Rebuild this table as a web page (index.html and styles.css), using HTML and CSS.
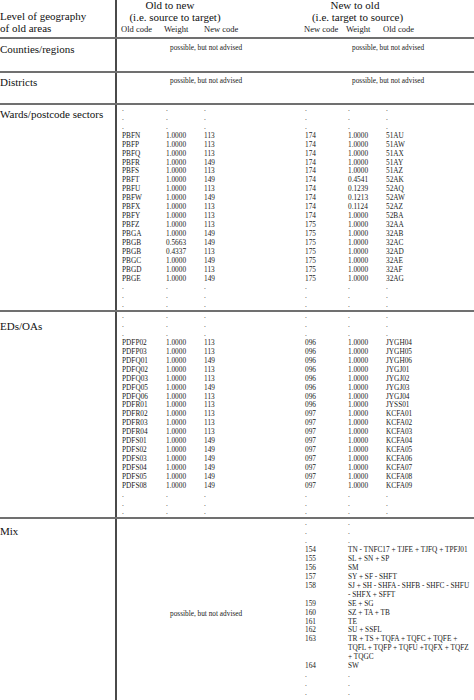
FILE: index.html
```html
<!DOCTYPE html>
<html>
<head>
<meta charset="utf-8">
<link rel="stylesheet" href="styles.css">
</head>
<body>
<div class="table">
  <div class="sec head">
    <div class="lab lab-head">Level of geography<br>of old areas</div>
    <div class="cell">
      <div class="groups">
        <div class="g g1"><div class="t1">Old to new</div><div>(i.e. source to target)</div></div>
        <div class="g g2"><div class="t1">New to old</div><div>(i.e. target to source)</div></div>
      </div>
      <div class="cols"><span>Old code</span><span>Weight</span><span>New code</span><span>New code</span><span>Weight</span><span>Old code</span></div>
    </div>
  </div>

  <div class="sec counties">
    <div class="lab">Counties/regions</div>
    <div class="cell pair"><span>possible, but not advised</span><span>possible, but not advised</span></div>
  </div>

  <div class="sec districts">
    <div class="lab">Districts</div>
    <div class="cell pair"><span>possible, but not advised</span><span>possible, but not advised</span></div>
  </div>

  <div class="sec wards">
    <div class="lab">Wards/postcode sectors</div>
    <div class="cell data">
      <div class="dr"><span>.</span><span>.</span><span>.</span><span>.</span><span>.</span><span>.</span></div>
      <div class="dr"><span>.</span><span>.</span><span>.</span><span>.</span><span>.</span><span>.</span></div>
      <div class="dr"><span>.</span><span>.</span><span>.</span><span>.</span><span>.</span><span>.</span></div>
      <div class="dr"><span>PBFN</span><span>1.0000</span><span>113</span><span>174</span><span>1.0000</span><span>51AU</span></div>
      <div class="dr"><span>PBFP</span><span>1.0000</span><span>113</span><span>174</span><span>1.0000</span><span>51AW</span></div>
      <div class="dr"><span>PBFQ</span><span>1.0000</span><span>113</span><span>174</span><span>1.0000</span><span>51AX</span></div>
      <div class="dr"><span>PBFR</span><span>1.0000</span><span>149</span><span>174</span><span>1.0000</span><span>51AY</span></div>
      <div class="dr"><span>PBFS</span><span>1.0000</span><span>113</span><span>174</span><span>1.0000</span><span>51AZ</span></div>
      <div class="dr"><span>PBFT</span><span>1.0000</span><span>149</span><span>174</span><span>0.4541</span><span>52AK</span></div>
      <div class="dr"><span>PBFU</span><span>1.0000</span><span>113</span><span>174</span><span>0.1239</span><span>52AQ</span></div>
      <div class="dr"><span>PBFW</span><span>1.0000</span><span>149</span><span>174</span><span>0.1213</span><span>52AW</span></div>
      <div class="dr"><span>PBFX</span><span>1.0000</span><span>113</span><span>174</span><span>0.1124</span><span>52AZ</span></div>
      <div class="dr"><span>PBFY</span><span>1.0000</span><span>113</span><span>174</span><span>1.0000</span><span>52BA</span></div>
      <div class="dr"><span>PBFZ</span><span>1.0000</span><span>113</span><span>175</span><span>1.0000</span><span>32AA</span></div>
      <div class="dr"><span>PBGA</span><span>1.0000</span><span>149</span><span>175</span><span>1.0000</span><span>32AB</span></div>
      <div class="dr"><span>PBGB</span><span>0.5663</span><span>149</span><span>175</span><span>1.0000</span><span>32AC</span></div>
      <div class="dr"><span>PBGB</span><span>0.4337</span><span>113</span><span>175</span><span>1.0000</span><span>32AD</span></div>
      <div class="dr"><span>PBGC</span><span>1.0000</span><span>149</span><span>175</span><span>1.0000</span><span>32AE</span></div>
      <div class="dr"><span>PBGD</span><span>1.0000</span><span>113</span><span>175</span><span>1.0000</span><span>32AF</span></div>
      <div class="dr"><span>PBGE</span><span>1.0000</span><span>149</span><span>175</span><span>1.0000</span><span>32AG</span></div>
      <div class="dr"><span>.</span><span>.</span><span>.</span><span>.</span><span>.</span><span>.</span></div>
      <div class="dr"><span>.</span><span>.</span><span>.</span><span>.</span><span>.</span><span>.</span></div>
      <div class="dr"><span>.</span><span>.</span><span>.</span><span>.</span><span>.</span><span>.</span></div>
    </div>
  </div>

  <div class="sec eds">
    <div class="lab">EDs/OAs</div>
    <div class="cell data">
      <div class="dr"><span>.</span><span>.</span><span>.</span><span>.</span><span>.</span><span>.</span></div>
      <div class="dr"><span>.</span><span>.</span><span>.</span><span>.</span><span>.</span><span>.</span></div>
      <div class="dr"><span>.</span><span>.</span><span>.</span><span>.</span><span>.</span><span>.</span></div>
      <div class="dr"><span>PDFP02</span><span>1.0000</span><span>113</span><span>096</span><span>1.0000</span><span>JYGH04</span></div>
      <div class="dr"><span>PDFP03</span><span>1.0000</span><span>113</span><span>096</span><span>1.0000</span><span>JYGH05</span></div>
      <div class="dr"><span>PDFQ01</span><span>1.0000</span><span>149</span><span>096</span><span>1.0000</span><span>JYGH06</span></div>
      <div class="dr"><span>PDFQ02</span><span>1.0000</span><span>113</span><span>096</span><span>1.0000</span><span>JYGJ01</span></div>
      <div class="dr"><span>PDFQ03</span><span>1.0000</span><span>113</span><span>096</span><span>1.0000</span><span>JYGJ02</span></div>
      <div class="dr"><span>PDFQ05</span><span>1.0000</span><span>149</span><span>096</span><span>1.0000</span><span>JYGJ03</span></div>
      <div class="dr"><span>PDFQ06</span><span>1.0000</span><span>113</span><span>096</span><span>1.0000</span><span>JYGJ04</span></div>
      <div class="dr"><span>PDFR01</span><span>1.0000</span><span>113</span><span>096</span><span>1.0000</span><span>JYSS01</span></div>
      <div class="dr"><span>PDFR02</span><span>1.0000</span><span>113</span><span>097</span><span>1.0000</span><span>KCFA01</span></div>
      <div class="dr"><span>PDFR03</span><span>1.0000</span><span>113</span><span>097</span><span>1.0000</span><span>KCFA02</span></div>
      <div class="dr"><span>PDFR04</span><span>1.0000</span><span>113</span><span>097</span><span>1.0000</span><span>KCFA03</span></div>
      <div class="dr"><span>PDFS01</span><span>1.0000</span><span>149</span><span>097</span><span>1.0000</span><span>KCFA04</span></div>
      <div class="dr"><span>PDFS02</span><span>1.0000</span><span>149</span><span>097</span><span>1.0000</span><span>KCFA05</span></div>
      <div class="dr"><span>PDFS03</span><span>1.0000</span><span>149</span><span>097</span><span>1.0000</span><span>KCFA06</span></div>
      <div class="dr"><span>PDFS04</span><span>1.0000</span><span>149</span><span>097</span><span>1.0000</span><span>KCFA07</span></div>
      <div class="dr"><span>PDFS05</span><span>1.0000</span><span>149</span><span>097</span><span>1.0000</span><span>KCFA08</span></div>
      <div class="dr"><span>PDFS08</span><span>1.0000</span><span>149</span><span>097</span><span>1.0000</span><span>KCFA09</span></div>
      <div class="dr"><span>.</span><span>.</span><span>.</span><span>.</span><span>.</span><span>.</span></div>
      <div class="dr"><span>.</span><span>.</span><span>.</span><span>.</span><span>.</span><span>.</span></div>
      <div class="dr"><span>.</span><span>.</span><span>.</span><span>.</span><span>.</span><span>.</span></div>
    </div>
  </div>

  <div class="sec mix">
    <div class="lab">Mix</div>
    <div class="cell mixcell">
      <div class="mixleft">possible, but not advised</div>
      <div class="mixright">
        <div class="mr"><span>.</span><span>.</span></div>
        <div class="mr"><span>.</span><span>.</span></div>
        <div class="mr"><span>.</span><span>.</span></div>
        <div class="mr"><span>154</span><span>TN - TNFC17 + TJFE + TJFQ + TPFJ01</span></div>
        <div class="mr"><span>155</span><span>SL + SN + SP</span></div>
        <div class="mr"><span>156</span><span>SM</span></div>
        <div class="mr"><span>157</span><span>SY + SF - SHFT</span></div>
        <div class="mr"><span>158</span><span>SJ + SH - SHFA - SHFB - SHFC - SHFU</span></div>
        <div class="mr"><span></span><span>- SHFX + SFFT</span></div>
        <div class="mr"><span>159</span><span>SE + SG</span></div>
        <div class="mr"><span>160</span><span>SZ + TA + TB</span></div>
        <div class="mr"><span>161</span><span>TE</span></div>
        <div class="mr"><span>162</span><span>SU + SSFL</span></div>
        <div class="mr"><span>163</span><span>TR + TS + TQFA + TQFC + TQFE +</span></div>
        <div class="mr"><span></span><span>TQFL + TQFP + TQFU +TQFX + TQFZ</span></div>
        <div class="mr"><span></span><span>+ TQGC</span></div>
        <div class="mr"><span>164</span><span>SW</span></div>
        <div class="mr"><span>.</span><span>.</span></div>
        <div class="mr"><span>.</span><span>.</span></div>
        <div class="mr"><span>.</span><span>.</span></div>
      </div>
    </div>
  </div>
</div>
</body>
</html>
```
FILE: styles.css
```css
html, body {
  margin: 0;
  padding: 0;
  background: #ffffff;
  overflow: hidden;
}
body {
  width: 474px;
  height: 700px;
  font-family: "Liberation Serif", "Times New Roman", serif;
  color: #1a1a1a;
}
.table {
  display: flex;
  flex-direction: column;
  height: 700px;
}
.sec {
  display: grid;
  grid-template-columns: 115px 1fr;
  border-bottom: 2px solid #707070;
}
.sec.mix {
  border-bottom: none;
  flex: 1;
}
.lab {
  font-size: 11px;
  line-height: 12px;
  white-space: nowrap;
  color: #111;
}
.cell {
  border-left: 2px solid #4a4a4a;
  min-width: 0;
}

/* header */
.head { height: 37px; }
.lab-head { padding-top: 10px; }
.groups {
  display: grid;
  grid-template-columns: 116px 1fr;
  font-size: 11px;
  line-height: 12px;
  margin-top: -1px;
  color: #111;
}
.g { text-align: center; white-space: nowrap; }
.g1 .t1 { padding-right: 10px; }
.g2 { padding-left: 8px; }
.g2 .t1 { padding-right: 5px; }
.cols {
  display: grid;
  grid-template-columns: 43px 40px 100px 42px 37px auto;
  padding-left: 4px;
  font-size: 8.5px;
  line-height: 12px;
  white-space: nowrap;
  color: #1a1a1a;
}

/* counties & districts */
.counties { height: 32px; }
.counties .lab { padding-top: 4px; }
.districts { height: 30px; }
.districts .lab { padding-top: 3px; }
.pair {
  display: grid;
  grid-template-columns: 235px 1fr;
  font-size: 7.3px;
  line-height: 9px;
  white-space: nowrap;
  color: #222;
}
.pair span:first-child { padding-left: 53px; }
.counties .pair { padding-top: 3.5px; }
.districts .pair { padding-top: 2.5px; }

/* data sections */
.wards .lab { padding-top: 3px; }
.eds .lab { padding-top: 8px; }
.data {
  font-size: 7.3px;
  line-height: 8.92px;
  color: #222;
  padding-left: 5px;
}
.dr {
  display: grid;
  grid-template-columns: 44px 38px 101px 43px 38px auto;
  white-space: nowrap;
}

/* mix */
.mix .lab { padding-top: 6px; }
.mixcell {
  display: flex;
  font-size: 7.3px;
  line-height: 8.92px;
  color: #222;
}
.mixleft {
  width: 135px;
  flex: none;
  padding-left: 53px;
  padding-top: 91px;
  white-space: nowrap;
}
.mixright {
  flex: none;
}
.mr {
  display: grid;
  grid-template-columns: 43px auto;
  white-space: nowrap;
}
```
